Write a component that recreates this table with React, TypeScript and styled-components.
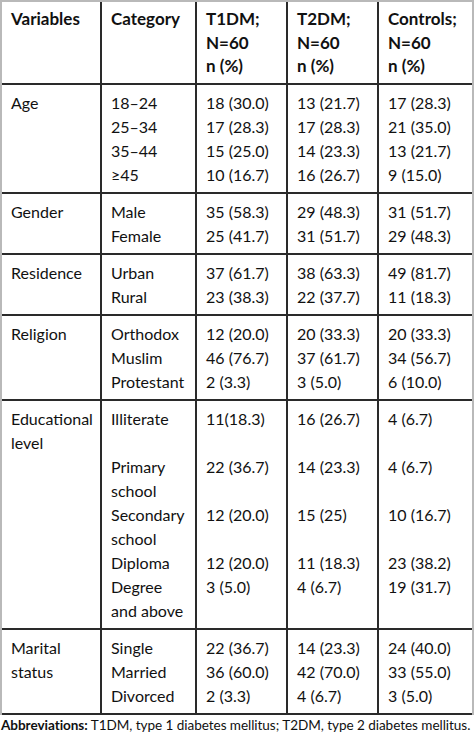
import React, { FC } from "react";
import styled, { createGlobalStyle } from "styled-components";

const GlobalStyle = createGlobalStyle`
  html, body {
    margin: 0;
    padding: 0;
    background: #ffffff;
  }
  body {
    font-family: Lato, "Open Sans", sans-serif;
    color: #111111;
  }
`;

const LINE = "#2a2a2a";
const FRAME = "#b9b9b9";

const Page = styled.div`
  width: 474px;
  height: 735px;
  overflow: hidden;
  display: flex;
  flex-direction: column;
`;

const Table = styled.div`
  width: 474px;
  box-sizing: border-box;
  border-left: 2px solid ${FRAME};
  border-right: 2px solid ${FRAME};
  border-top: 2px solid ${FRAME};
`;

const Row = styled.div<{ $head?: boolean }>`
  display: grid;
  grid-template-columns: 98px 95px 91px 91px 1fr;
  border-bottom: 2px solid ${LINE};
  font-weight: ${(p) => (p.$head ? 700 : 400)};
`;

const Cell = styled.div<{ $first?: boolean; $head?: boolean }>`
  border-left: ${(p) => (p.$first ? "none" : `2px solid ${LINE}`)};
  padding: ${(p) => (p.$head ? "5px 2px 5px 9px" : "6px 2px 5px 9px")};
  min-width: 0;
`;

const Line = styled.div<{ $head?: boolean }>`
  font-size: ${(p) => (p.$head ? "17px" : "16px")};
  line-height: ${(p) => (p.$head ? "23.5px" : "24px")};
  height: ${(p) => (p.$head ? "23.5px" : "24px")};
  white-space: nowrap;
`;

const Footer = styled.div`
  font-size: 13.55px;
  line-height: 20px;
  white-space: nowrap;
  padding-left: 1px;
  letter-spacing: -0.05px;
`;

const Strong = styled.span`
  font-weight: 700;
`;

type Group = {
  columns: string[][];
};

const header: string[][] = [
  ["Variables"],
  ["Category"],
  ["T1DM;", "N=60", "n (%)"],
  ["T2DM;", "N=60", "n (%)"],
  ["Controls;", "N=60", "n (%)"],
];

const groups: Group[] = [
  {
    columns: [
      ["Age"],
      ["18–24", "25–34", "35–44", "≥45"],
      ["18 (30.0)", "17 (28.3)", "15 (25.0)", "10 (16.7)"],
      ["13 (21.7)", "17 (28.3)", "14 (23.3)", "16 (26.7)"],
      ["17 (28.3)", "21 (35.0)", "13 (21.7)", "9 (15.0)"],
    ],
  },
  {
    columns: [
      ["Gender"],
      ["Male", "Female"],
      ["35 (58.3)", "25 (41.7)"],
      ["29 (48.3)", "31 (51.7)"],
      ["31 (51.7)", "29 (48.3)"],
    ],
  },
  {
    columns: [
      ["Residence"],
      ["Urban", "Rural"],
      ["37 (61.7)", "23 (38.3)"],
      ["38 (63.3)", "22 (37.7)"],
      ["49 (81.7)", "11 (18.3)"],
    ],
  },
  {
    columns: [
      ["Religion"],
      ["Orthodox", "Muslim", "Protestant"],
      ["12 (20.0)", "46 (76.7)", "2 (3.3)"],
      ["20 (33.3)", "37 (61.7)", "3 (5.0)"],
      ["20 (33.3)", "34 (56.7)", "6 (10.0)"],
    ],
  },
  {
    columns: [
      ["Educational", "level"],
      ["Illiterate", "", "Primary", "school", "Secondary", "school", "Diploma", "Degree", "and above"],
      ["11(18.3)", "", "22 (36.7)", "", "12 (20.0)", "", "12 (20.0)", "3 (5.0)", ""],
      ["16 (26.7)", "", "14 (23.3)", "", "15 (25)", "", "11 (18.3)", "4 (6.7)", ""],
      ["4 (6.7)", "", "4 (6.7)", "", "10 (16.7)", "", "23 (38.2)", "19 (31.7)", ""],
    ],
  },
  {
    columns: [
      ["Marital", "status"],
      ["Single", "Married", "Divorced"],
      ["22 (36.7)", "36 (60.0)", "2 (3.3)"],
      ["14 (23.3)", "42 (70.0)", "4 (6.7)"],
      ["24 (40.0)", "33 (55.0)", "3 (5.0)"],
    ],
  },
];

const TableRow: FC<{ columns: string[][]; head?: boolean }> = ({ columns, head }) => (
  <Row $head={head}>
    {columns.map((lines, i) => (
      <Cell key={i} $first={i === 0} $head={head}>
        {lines.map((text, j) => (
          <Line key={j} $head={head}>
            {text || "\u00a0"}
          </Line>
        ))}
      </Cell>
    ))}
  </Row>
);

const App: FC = () => {
  return (
    <Page>
      <GlobalStyle />
      <Table>
        <TableRow columns={header} head />
        {groups.map((g, i) => (
          <TableRow key={i} columns={g.columns} />
        ))}
      </Table>
      <Footer>
        <Strong>Abbreviations:</Strong> T1DM, type 1 diabetes mellitus; T2DM, type 2 diabetes mellitus.
      </Footer>
    </Page>
  );
};

export default App;
